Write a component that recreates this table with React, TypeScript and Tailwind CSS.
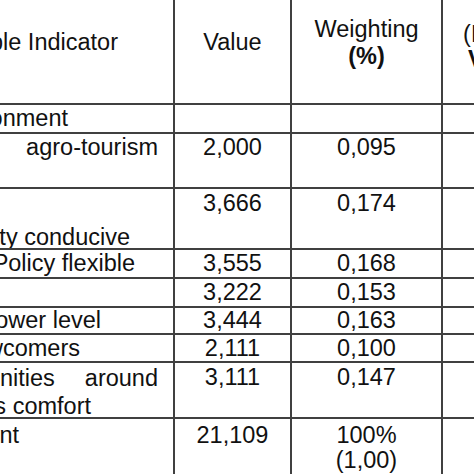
import React from "react";

const cell = "bg-white overflow-hidden min-w-0 whitespace-nowrap";
const mid = `${cell} flex items-center justify-center leading-[27px]`;
const top = `${cell} flex flex-col items-center`;
const first = `${cell} flex items-center justify-end leading-[27px]`;

const singleRows = [
  { label: "Local Policy flexible", pr: "pr-[38px]", value: "3,555", weight: "0,168" },
  { label: "", pr: "", value: "3,222", weight: "0,153" },
  { label: "Purchasing power level", pr: "pr-[72px]", value: "3,444", weight: "0,163" },
  { label: "Acceptance of newcomers", pr: "pr-[93px]", value: "2,111", weight: "0,100" },
];

export default function App() {
  return (
    <div className="w-[474px] h-[474px] overflow-hidden bg-white font-['Liberation_Sans',Arial,sans-serif] text-[23.5px] text-[#111]">
      <div className="grid grid-cols-[173px_115px_149px_minmax(0,1fr)] grid-rows-[103px_27px_53px_59px_27px_27px_25px_26px_54px_55px] gap-[2px] bg-[#404040]">
        {/* header */}
        <div className={`${first} pr-[55px] pb-[18px]`}>Variable Indicator</div>
        <div className={`${mid} pb-[18px]`}>Value</div>
        <div className={`${mid} flex-col pb-[18px]`}>
          <span>Weighting</span>
          <span className="font-bold">(%)</span>
        </div>
        <div className={`${cell} flex flex-col pt-[22px] leading-[25px]`}>
          <span className="pl-[20px]">(Indicator</span>
          <span className="pl-[25px] font-bold">Value</span>
        </div>

        {/* environment */}
        <div className={`${first} pr-[105px]`}>Environment</div>
        <div className={cell}></div>
        <div className={cell}></div>
        <div className={cell}></div>

        {/* agro-tourism */}
        <div className={`${cell} flex justify-end pr-[15px] leading-[27px]`}>agro-tourism</div>
        <div className={`${top} leading-[27px]`}>2,000</div>
        <div className={`${top} leading-[27px]`}>0,095</div>
        <div className={cell}></div>

        {/* security */}
        <div className={`${cell} flex justify-end pr-[43px] pt-[38px] leading-[20px]`}>Security conducive</div>
        <div className={`${top} pt-[1px] leading-[27px]`}>3,666</div>
        <div className={`${top} pt-[1px] leading-[27px]`}>0,174</div>
        <div className={cell}></div>

        {singleRows.map((r, i) => (
          <React.Fragment key={i}>
            <div className={`${first} ${r.pr}`}>{r.label}</div>
            <div className={mid}>{r.value}</div>
            <div className={mid}>{r.weight}</div>
            <div className={cell}></div>
          </React.Fragment>
        ))}

        {/* opportunities */}
        <div className={`${cell} flex flex-col pt-[1px] leading-[28px]`}>
          <div className="flex justify-between pr-[15px]">
            <span>nities</span>
            <span>around</span>
          </div>
          <div className="flex justify-end pr-[82px]">tourists comfort</div>
        </div>
        <div className={`${top} pt-[1px] leading-[27px]`}>3,111</div>
        <div className={`${top} pt-[1px] leading-[27px]`}>0,147</div>
        <div className={cell}></div>

        {/* total */}
        <div className={`${cell} flex justify-end pr-[154px] pt-[3px] leading-[27px]`}>Amount</div>
        <div className={`${top} pt-[3px] leading-[27px]`}>21,109</div>
        <div className={`${top} pt-[4px] leading-[25px]`}>
          <span>100%</span>
          <span>(1,00)</span>
        </div>
        <div className={cell}></div>
      </div>
    </div>
  );
}
